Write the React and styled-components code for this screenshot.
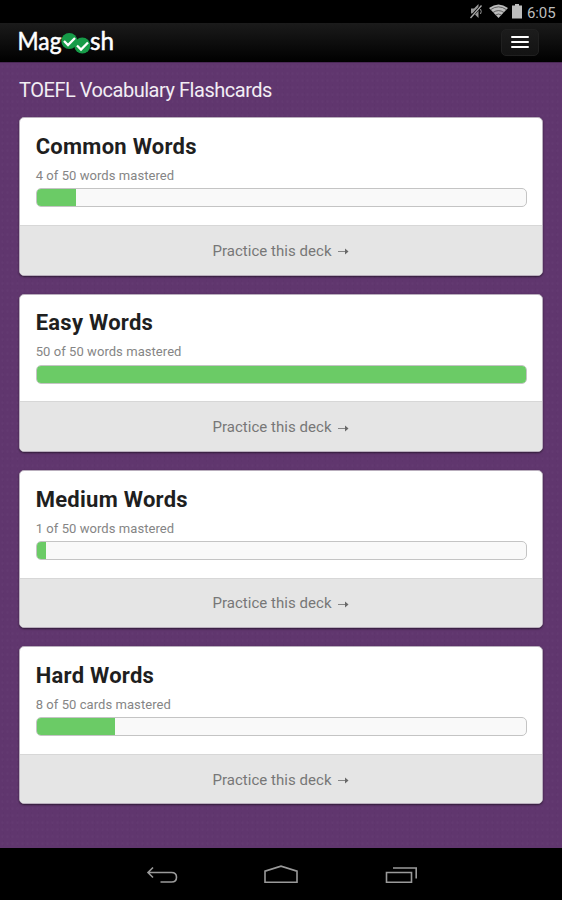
import React from "react";
import styled, { createGlobalStyle } from "styled-components";

const GlobalStyle = createGlobalStyle`
  * {
    box-sizing: border-box;
  }

  body {
    margin: 0;
    background-color: #000;
    font-family: Roboto, "Liberation Sans", sans-serif;
  }
`;

const Screen = styled.div`
  display: flex;
  flex-direction: column;
  height: 900px;
  overflow: hidden;
`;

// android status bar
const StatusBar = styled.div`
  display: flex;
  justify-content: flex-end;
  flex: 0 0 23px;
  height: 23px;
  min-height: 0;
  padding-right: 6px;
  background-color: #000;
`;

const Clock = styled.span`
  width: 29px;
  height: 23px;
  margin-left: 3px;
  color: #bdbdbd;
  font-size: 15px;
  letter-spacing: -0.1px;
  line-height: 26px;
`;

const Header = styled.header`
  display: flex;
  justify-content: space-between;
  align-items: center;
  flex: 0 0 39px;
  padding: 0 23px 0 18px;
  background: linear-gradient(#1b1b1b, #000);
`;

const MenuButton = styled.button`
  display: flex;
  flex-direction: column;
  justify-content: center;
  align-items: center;
  gap: 3px;
  width: 38px;
  height: 27px;
  padding: 0 0 1px;
  border: 1px solid #202020;
  border-radius: 5px;
  background: linear-gradient(#1c1c1c, #131313);
`;

const MenuLine = styled.span`
  width: 18px;
  height: 2px;
  border-radius: 1px;
  background-color: #fff;
`;

const Main = styled.main`
  flex: 1;
  min-height: 0;
  padding: 15px 19px 0;
  border-top: 1px solid #4a2856;
  background-color: #60366e;
  background-image: radial-gradient(rgba(255, 255, 255, 0.02) 0.7px, transparent 1.4px),
    radial-gradient(rgba(0, 0, 0, 0.02) 0.7px, transparent 1.4px);
  background-size: 5px 7px, 7px 4px;
`;

const PageTitle = styled.h1`
  margin: 0 0 15.3px;
  color: #f2edf4;
  font-size: 20px;
  font-weight: 400;
  letter-spacing: -0.47px;
  line-height: 24px;
`;

const DeckList = styled.div`
  display: flex;
  flex-direction: column;
  gap: 18px;
`;

const Card = styled.section`
  height: 158.3px;
  border: 1px solid #b9aebd;
  border-radius: 5px;
  background-color: #fff;
  box-shadow: 0 1px 2px rgba(0, 0, 0, 0.5);
  overflow: hidden;
`;

const CardBody = styled.div`
  height: 106.7px;
  padding: 14.9px 15.5px 0 15.7px;
`;

const DeckName = styled.h2`
  margin: 0;
  color: #1f1f1f;
  font-size: 22px;
  font-weight: 700;
  letter-spacing: 0.26px;
  line-height: 28px;
`;

const Mastered = styled.p`
  margin: 6px 0 3.2px;
  color: #858585;
  font-size: 13px;
  letter-spacing: 0.06px;
  line-height: 18px;
`;

const Track = styled.div`
  height: 19px;
  border: 1px solid #c4c4c4;
  border-radius: 5px;
  background-color: #f9f9f9;
  overflow: hidden;
`;

const Fill = styled.div`
  height: 100%;
  background-color: #6bcb66;
`;

const PracticeLink = styled.a`
  display: flex;
  justify-content: center;
  align-items: center;
  gap: 6px;
  height: 50.5px;
  padding-right: 1px;
  border-top: 1px solid #d7d7d7;
  background-color: #e5e5e5;
  color: #777;
  font-size: 15px;
  letter-spacing: 0.03px;
`;

const NavBar = styled.nav`
  display: flex;
  justify-content: center;
  flex: 0 0 52px;
  gap: 76px;
  background-color: #000;
`;

const decks = [
  { name: "Common Words", done: 4, total: 50, unit: "words" },
  { name: "Easy Words", done: 50, total: 50, unit: "words" },
  { name: "Medium Words", done: 1, total: 50, unit: "words" },
  { name: "Hard Words", done: 8, total: 50, unit: "cards" },
];

const StatusIcons = () => (
  <svg width="56" height="23" viewBox="468 0 56 23">
    {/* muted speaker */}
    <path d="M471 8.500h3l4.500-4.500v14l-4.500-4.500h-3z" fill="#999" />
    <path d="M480.500 9q1.500 2.500 0 5" fill="none" stroke="#999" />
    <path d="M470 18L482 5" stroke="#000" strokeWidth="2.6" />
    <path d="M470.500 18L481.500 5.500" stroke="#aaa" strokeWidth="1.3" />
    {/* wifi */}
    <path d="M489 8Q498.500 1 508 8L498.500 18z" fill="#bdbdbd" />
    <path
      d="M490.500 9.700Q498.500 4 506.500 9.700M493 12.500Q498.500 8.700 504 12.500M495.500 15Q498.500 13 501.500 15"
      fill="none"
      stroke="#333"
      strokeWidth="0.7"
    />
    {/* battery */}
    <path d="M515 4h4v1.500h3v13h-10v-13h3z" fill="#bdbdbd" />
  </svg>
);

const Logo = () => (
  <svg width="98" height="35" viewBox="18 25 98 35">
    <g
      fill="#fff"
      stroke="#fff"
      strokeWidth="0.5"
      fontFamily="Lato, sans-serif"
      fontSize="24.5"
      fontWeight="400"
    >
      <text x="17.500" y="49.800" textLength="44" lengthAdjust="spacingAndGlyphs">
        Mag
      </text>
      <text x="90" y="49.800" textLength="24" lengthAdjust="spacingAndGlyphs">
        sh
      </text>
    </g>
    <circle cx="69.300" cy="41" r="8" fill="#169b48" />
    <circle cx="82.300" cy="45.500" r="8" fill="#169b48" />
    <path
      d="M64 41l4 4 7-7M77 45.500l4 4 7-7"
      fill="none"
      stroke="#fff"
      strokeWidth="2.300"
    />
  </svg>
);

const ArrowIcon = () => (
  <svg width="11" height="9" viewBox="0 0 11 9">
    <path d="M0 5.500h9" stroke="#858585" strokeWidth="1" />
    <path d="M7 2.500l3.500 3-3.500 3z" fill="#686868" />
  </svg>
);

const NavIcon = ({ x, children }) => (
  <svg
    width="44"
    height="52"
    viewBox={`${x} 848 44 52`}
    fill="none"
    stroke="#9a9a9a"
    strokeWidth="1.6"
  >
    {children}
  </svg>
);

const Deck = ({ name, done, total, unit }) => (
  <Card>
    <CardBody>
      <DeckName>{name}</DeckName>
      <Mastered>
        {done} of {total} {unit} mastered
      </Mastered>
      <Track>
        <Fill style={{ width: `${(done / total) * 100}%` }} />
      </Track>
    </CardBody>
    <PracticeLink>
      Practice this deck
      <ArrowIcon />
    </PracticeLink>
  </Card>
);

const App = () => {
  return (
    <>
      <GlobalStyle />
      <Screen>
        <StatusBar>
          <StatusIcons />
          <Clock>6:05</Clock>
        </StatusBar>
        <Header>
          <Logo />
          <MenuButton aria-label="Menu">
            <MenuLine />
            <MenuLine />
            <MenuLine />
          </MenuButton>
        </Header>
        <Main>
          <PageTitle>TOEFL Vocabulary Flashcards</PageTitle>
          <DeckList>
            {decks.map((deck) => (
              <Deck key={deck.name} {...deck} />
            ))}
          </DeckList>
        </Main>
        <NavBar>
          <NavIcon x={139}>
            <path d="M153 867.500l-5 5 5 5M148 872.500h23.500q5 0 5 4.700t-5 4.800h-11" />
          </NavIcon>
          <NavIcon x={259}>
            <path d="M265 882.200v-11l16-5 16 5v11z" />
          </NavIcon>
          <NavIcon x={379}>
            <path d="M386.500 872.500h25v9.700h-25zM393 868h23.200v10.500" />
          </NavIcon>
        </NavBar>
      </Screen>
    </>
  );
};

export default App;
